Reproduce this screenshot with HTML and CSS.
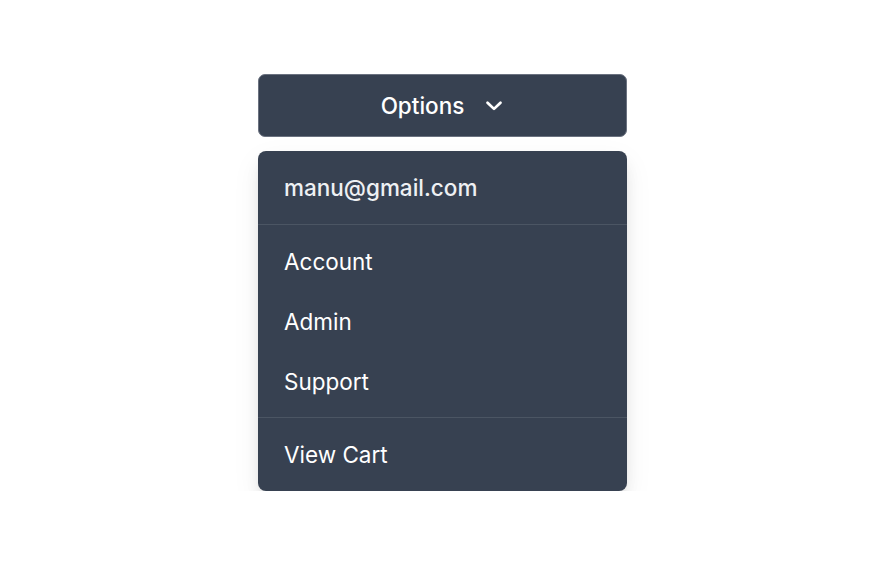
FILE: index.html
```html
<!DOCTYPE html>
<html lang="en">
<head>
<meta charset="utf-8">
<title>Options</title>
<link rel="stylesheet" href="styles.css">
</head>
<body>
<div class="dropdown">
  <button class="trigger" type="button">
    <span>Options</span>
    <svg class="chev" viewBox="0 0 20 20" width="24" height="24" aria-hidden="true"><path d="M4.6 7.2 L10 12.4 L15.4 7.2" fill="none" stroke="#fff" stroke-width="2.3" stroke-linecap="round" stroke-linejoin="round"/></svg>
  </button>
  <div class="menu">
    <div class="section single">
      <span class="email">manu@gmail.com</span>
    </div>
    <div class="section group">
      <a class="item">Account</a>
      <a class="item">Admin</a>
      <a class="item">Support</a>
    </div>
    <div class="section single last">
      <a class="item-text">View Cart</a>
    </div>
  </div>
</div>
</body>
</html>
```
FILE: styles.css
```css
* { box-sizing: border-box; }
html, body { margin: 0; background: #fff; }
body {
  display: flex;
  justify-content: center;
  padding: 74px 0 0 3px;
  font-family: Inter, "Noto Sans", sans-serif;
  -webkit-font-smoothing: antialiased;
}
.dropdown {
  width: 369px;
  display: flex;
  flex-direction: column;
  gap: 14px;
}
.trigger {
  height: 63px;
  display: flex;
  align-items: center;
  justify-content: center;
  gap: 18px;
  background: #374151;
  border: 1px solid #6b7280;
  border-radius: 7px;
  color: #fff;
  font-family: inherit;
  font-size: 22.5px;
  font-weight: 500;
  padding: 0 0 0 2px;
}
.chev { display: block; }
.menu {
  background: #374151;
  border-radius: 8px;
  box-shadow: 0 10px 15px -3px rgba(0,0,0,0.1), 0 4px 6px -4px rgba(0,0,0,0.1), 0 10px 30px rgba(0,0,0,0.06);
  color: #fff;
  font-size: 22.5px;
  overflow: hidden;
}
.section + .section { border-top: 1px solid #4b5563; }
.single {
  height: 73px;
  display: flex;
  align-items: center;
  padding: 0 26px;
}
.single.last { height: 74px; }
.email { font-weight: 500; color: #eef0f3; }
.group { padding: 6px 0; }
.item {
  display: flex;
  align-items: center;
  height: 60px;
  padding: 0 26px;
}
```
